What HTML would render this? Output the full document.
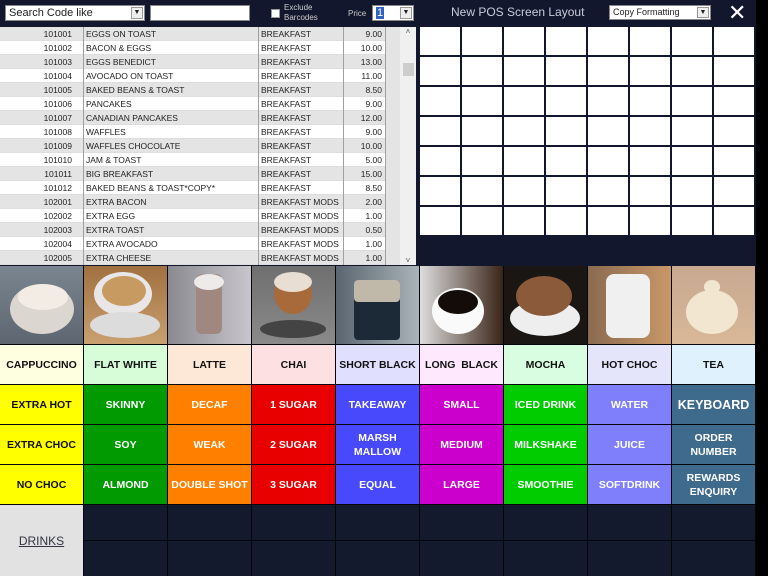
<!DOCTYPE html>
<html><head><style>
*{margin:0;padding:0;box-sizing:border-box}
body{width:768px;height:576px;background:#000;position:relative;overflow:hidden;font-family:"Liberation Sans",sans-serif}
#main{position:absolute;left:0;top:0;width:756px;height:576px;background:#13172e}
.abs{position:absolute}
.sel{background:#fff;border:1px solid #888;font-size:11px;color:#222;padding-left:3px;line-height:14px}
.arr{position:absolute;right:1px;top:1px;width:12px;height:12px;background:#eee;border:1px solid #999;font-size:7px;text-align:center;line-height:10px}
#tbl{position:absolute;left:0;top:27px;width:400px;height:238px;overflow:hidden;font-size:8.5px;color:#222}
.r{height:14px;line-height:14px;position:relative;border-bottom:1px solid #ddd}
.r:nth-child(odd){background:#e4e4e4}.r:nth-child(even){background:#fff}
.r span{position:absolute;top:0}
.c1{right:328px}.c2{left:86px}.c3{left:261px}.c4{right:18px}
.vl{position:absolute;top:27px;height:238px;width:1px;background:#a0a0a0}
#tg{position:absolute;left:420px;top:27px;width:336px;display:grid;grid-template-columns:repeat(8,40px);grid-auto-rows:28px;gap:2px}
#tg div{background:#fff}
#bg{position:absolute;left:0;top:266px;width:756px;display:grid;grid-template-columns:repeat(9,83px);grid-template-rows:78px 39px 39px 39px 39px 35px 35px;gap:1px;background:#05060c}
.b{display:flex;align-items:center;justify-content:center;text-align:center;font-weight:bold;font-size:10.5px;color:#fff;line-height:14px}
.lb{color:#111}
.img{position:relative;overflow:hidden}
.cup{position:absolute;border-radius:50%}
.d{background:#131a2e}
</style></head><body>
<div id="main">
<div class="abs sel" style="left:5px;top:5px;width:140px;height:16px">Search Code like<div class="arr">▼</div></div>
<div class="abs sel" style="left:150px;top:5px;width:100px;height:16px"></div>
<div class="abs" style="left:271px;top:9px;width:9px;height:9px;background:#fff;border:1px solid #999"></div>
<div class="abs" style="left:284px;top:3px;font-size:8px;color:#ccc;line-height:10px">Exclude<br>Barcodes</div>
<div class="abs" style="left:348px;top:9px;font-size:8px;color:#ccc">Price</div>
<div class="abs sel" style="left:372px;top:5px;width:42px;height:16px"><span style="background:#3060c0;color:#fff;padding:0 1px">1</span><div class="arr">▼</div></div>
<div class="abs" style="left:451px;top:5px;font-size:12px;color:#c8ccd8">New POS Screen Layout</div>
<div class="abs sel" style="left:609px;top:5px;width:102px;height:15px;font-size:9px;line-height:13px">Copy Formatting<div class="arr" style="height:11px">▼</div></div>
<div class="abs" style="left:728px;top:0px;font-size:22px;color:#fff;line-height:26px">✕</div>

<div id="tbl">
<div class="r"><span class="c1">101001</span><span class="c2">EGGS ON TOAST</span><span class="c3">BREAKFAST</span><span class="c4">9.00</span></div>
<div class="r"><span class="c1">101002</span><span class="c2">BACON &amp; EGGS</span><span class="c3">BREAKFAST</span><span class="c4">10.00</span></div>
<div class="r"><span class="c1">101003</span><span class="c2">EGGS BENEDICT</span><span class="c3">BREAKFAST</span><span class="c4">13.00</span></div>
<div class="r"><span class="c1">101004</span><span class="c2">AVOCADO ON TOAST</span><span class="c3">BREAKFAST</span><span class="c4">11.00</span></div>
<div class="r"><span class="c1">101005</span><span class="c2">BAKED BEANS &amp; TOAST</span><span class="c3">BREAKFAST</span><span class="c4">8.50</span></div>
<div class="r"><span class="c1">101006</span><span class="c2">PANCAKES</span><span class="c3">BREAKFAST</span><span class="c4">9.00</span></div>
<div class="r"><span class="c1">101007</span><span class="c2">CANADIAN PANCAKES</span><span class="c3">BREAKFAST</span><span class="c4">12.00</span></div>
<div class="r"><span class="c1">101008</span><span class="c2">WAFFLES</span><span class="c3">BREAKFAST</span><span class="c4">9.00</span></div>
<div class="r"><span class="c1">101009</span><span class="c2">WAFFLES CHOCOLATE</span><span class="c3">BREAKFAST</span><span class="c4">10.00</span></div>
<div class="r"><span class="c1">101010</span><span class="c2">JAM &amp; TOAST</span><span class="c3">BREAKFAST</span><span class="c4">5.00</span></div>
<div class="r"><span class="c1">101011</span><span class="c2">BIG BREAKFAST</span><span class="c3">BREAKFAST</span><span class="c4">15.00</span></div>
<div class="r"><span class="c1">101012</span><span class="c2">BAKED BEANS &amp; TOAST*COPY*</span><span class="c3">BREAKFAST</span><span class="c4">8.50</span></div>
<div class="r"><span class="c1">102001</span><span class="c2">EXTRA BACON</span><span class="c3">BREAKFAST MODS</span><span class="c4">2.00</span></div>
<div class="r"><span class="c1">102002</span><span class="c2">EXTRA EGG</span><span class="c3">BREAKFAST MODS</span><span class="c4">1.00</span></div>
<div class="r"><span class="c1">102003</span><span class="c2">EXTRA TOAST</span><span class="c3">BREAKFAST MODS</span><span class="c4">0.50</span></div>
<div class="r"><span class="c1">102004</span><span class="c2">EXTRA AVOCADO</span><span class="c3">BREAKFAST MODS</span><span class="c4">1.00</span></div>
<div class="r"><span class="c1">102005</span><span class="c2">EXTRA CHEESE</span><span class="c3">BREAKFAST MODS</span><span class="c4">1.00</span></div>
</div>
<div class="vl" style="left:83px"></div><div class="vl" style="left:258px"></div><div class="vl" style="left:343px"></div><div class="vl" style="left:385px"></div>
<div class="abs" style="left:386px;top:27px;width:14px;height:238px;background:#e4e4e4"></div>
<div class="abs" style="left:400px;top:27px;width:16px;height:238px;background:#f0f0f0;font-size:8px;color:#555;text-align:center">˄<div style="position:absolute;left:3px;top:36px;width:11px;height:13px;background:#cdcdcd"></div><div style="position:absolute;bottom:0;width:16px">˅</div></div>

<div id="tg">
<div></div><div></div><div></div><div></div><div></div><div></div><div></div><div></div>
<div></div><div></div><div></div><div></div><div></div><div></div><div></div><div></div>
<div></div><div></div><div></div><div></div><div></div><div></div><div></div><div></div>
<div></div><div></div><div></div><div></div><div></div><div></div><div></div><div></div>
<div></div><div></div><div></div><div></div><div></div><div></div><div></div><div></div>
<div></div><div></div><div></div><div></div><div></div><div></div><div></div><div></div>
<div></div><div></div><div></div><div></div><div></div><div></div><div></div><div></div>
</div>

<div id="bg">
<div class="img" style="background:linear-gradient(#7a8590,#5d6670)"><div class="cup" style="left:10px;top:18px;width:64px;height:50px;background:#dcd6d0"></div><div class="cup" style="left:18px;top:18px;width:50px;height:26px;background:#f3ece4"></div></div>
<div class="img" style="background:linear-gradient(#a07040,#c9a070)"><div class="cup" style="left:10px;top:6px;width:58px;height:44px;background:#e8e6e6"></div><div class="cup" style="left:18px;top:10px;width:44px;height:30px;background:#c69a60"></div><div class="cup" style="left:6px;top:46px;width:70px;height:26px;background:#dcdcdc"></div></div>
<div class="img" style="background:linear-gradient(90deg,#8a8a90,#c8c6cc)"><div class="cup" style="left:28px;top:8px;width:26px;height:60px;border-radius:6px;background:#a08880"></div><div class="cup" style="left:26px;top:8px;width:30px;height:16px;background:#eeeaea"></div></div>
<div class="img" style="background:linear-gradient(#6f6f6f,#8a8a8a)"><div class="cup" style="left:22px;top:8px;width:38px;height:40px;background:#a86a3a"></div><div class="cup" style="left:22px;top:6px;width:38px;height:20px;background:#e8ded4"></div><div class="cup" style="left:8px;top:54px;width:66px;height:18px;background:#444"></div></div>
<div class="img" style="background:linear-gradient(90deg,#5a6570,#aab4b8)"><div class="cup" style="left:18px;top:14px;width:46px;height:60px;border-radius:4px;background:#1c2a38"></div><div class="cup" style="left:18px;top:14px;width:46px;height:22px;border-radius:4px;background:#c0b8a8"></div></div>
<div class="img" style="background:linear-gradient(90deg,#ddd,#3a2418)"><div class="cup" style="left:12px;top:22px;width:52px;height:46px;background:#fafafa"></div><div class="cup" style="left:18px;top:24px;width:40px;height:24px;background:#140c08"></div></div>
<div class="img" style="background:#1a1614"><div class="cup" style="left:6px;top:34px;width:70px;height:36px;background:#eee"></div><div class="cup" style="left:12px;top:10px;width:56px;height:40px;background:#8a5a3a"></div></div>
<div class="img" style="background:linear-gradient(90deg,#8a6a50,#c89868)"><div class="cup" style="left:18px;top:8px;width:44px;height:64px;border-radius:8px;background:#f0f0f0"></div></div>
<div class="img" style="background:linear-gradient(#c8a890,#d8b898)"><div class="cup" style="left:14px;top:24px;width:52px;height:44px;background:#f2e6d0"></div><div class="cup" style="left:32px;top:14px;width:16px;height:14px;background:#f2e6d0"></div></div>

<div class="b lb" style="background:#fefee0">CAPPUCCINO</div>
<div class="b lb" style="background:#d6fdd8">FLAT WHITE</div>
<div class="b lb" style="background:#fde8d8">LATTE</div>
<div class="b lb" style="background:#fde0e2">CHAI</div>
<div class="b lb" style="background:#e0e0fe">SHORT BLACK</div>
<div class="b lb" style="background:#fde8fd">LONG&nbsp; BLACK</div>
<div class="b lb" style="background:#d8fde0">MOCHA</div>
<div class="b lb" style="background:#e4e4fb">HOT CHOC</div>
<div class="b lb" style="background:#def1fd">TEA</div>

<div class="b lb" style="background:#ffff00">EXTRA HOT</div>
<div class="b" style="background:#019a01">SKINNY</div>
<div class="b" style="background:#ff8000">DECAF</div>
<div class="b" style="background:#e80000">1 SUGAR</div>
<div class="b" style="background:#4848fc">TAKEAWAY</div>
<div class="b" style="background:#cc00cc">SMALL</div>
<div class="b" style="background:#00cc00">ICED DRINK</div>
<div class="b" style="background:#7f7ffc">WATER</div>
<div class="b" style="background:#3e6a8c;font-size:12.5px">KEYBOARD</div>

<div class="b lb" style="background:#ffff00">EXTRA CHOC</div>
<div class="b" style="background:#019a01">SOY</div>
<div class="b" style="background:#ff8000">WEAK</div>
<div class="b" style="background:#e80000">2 SUGAR</div>
<div class="b" style="background:#4848fc">MARSH<br>MALLOW</div>
<div class="b" style="background:#cc00cc">MEDIUM</div>
<div class="b" style="background:#00cc00">MILKSHAKE</div>
<div class="b" style="background:#7f7ffc">JUICE</div>
<div class="b" style="background:#3e6a8c">ORDER<br>NUMBER</div>

<div class="b lb" style="background:#ffff00">NO CHOC</div>
<div class="b" style="background:#019a01">ALMOND</div>
<div class="b" style="background:#ff8000">DOUBLE SHOT</div>
<div class="b" style="background:#e80000">3 SUGAR</div>
<div class="b" style="background:#4848fc">EQUAL</div>
<div class="b" style="background:#cc00cc">LARGE</div>
<div class="b" style="background:#00cc00">SMOOTHIE</div>
<div class="b" style="background:#7f7ffc">SOFTDRINK</div>
<div class="b" style="background:#3e6a8c">REWARDS<br>ENQUIRY</div>

<div class="b" style="background:#e2e2e2;color:#334;font-weight:normal;font-size:12px;text-decoration:underline;grid-row:span 2">DRINKS</div>
<div class="d"></div><div class="d"></div><div class="d"></div><div class="d"></div><div class="d"></div><div class="d"></div><div class="d"></div><div class="d"></div>
<div class="d"></div><div class="d"></div><div class="d"></div><div class="d"></div><div class="d"></div><div class="d"></div><div class="d"></div><div class="d"></div>
</div>
</div>
</body></html>
